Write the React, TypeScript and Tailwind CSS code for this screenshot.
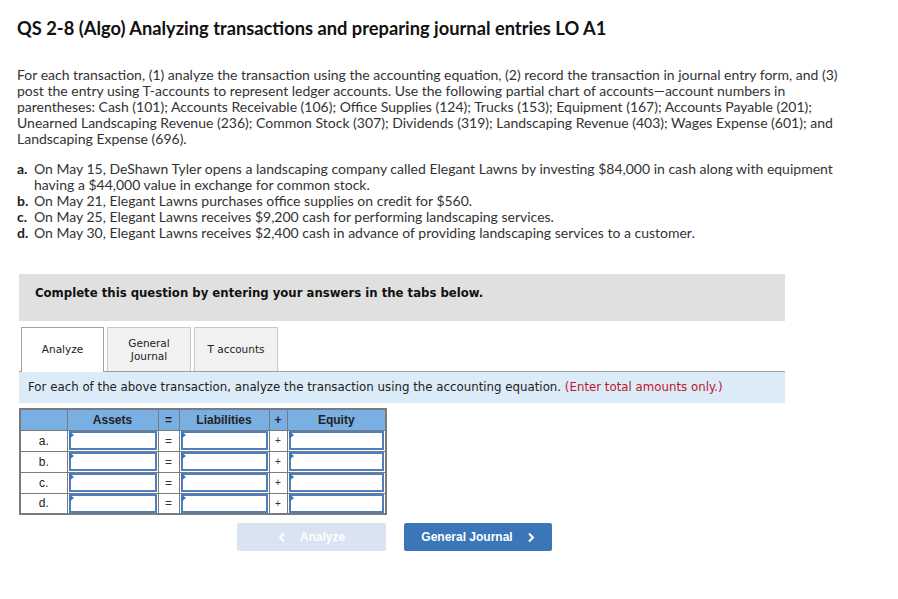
import React from 'react';

const rows = ['a.', 'b.', 'c.', 'd.'];

const InputCell: React.FC = () => (
  <td className="border border-[#7a7a7a] p-0 bg-white">
    <div className="relative h-[19px] mx-[1px] border-2 border-[#4f7fbd] bg-white">
      <span className="absolute -left-[2px] -top-[2px] w-0 h-0 border-t-[4px] border-b-[4px] border-l-[5px] border-t-transparent border-b-transparent border-l-[#3b73b9]" />
    </div>
  </td>
);

const Chevron: React.FC<{ left?: boolean }> = ({ left }) => (
  <svg width="8" height="11" viewBox="0 0 8 11">
    <path d={left ? 'M6 1.5 L2 5.5 L6 9.5' : 'M2 1.5 L6 5.5 L2 9.5'} stroke="white" strokeWidth="2" fill="none" />
  </svg>
);

const App: React.FC = () => {
  return (
    <div className="w-[898px] h-[599px] bg-white text-[#222] font-['Lato','Open_Sans',sans-serif]">
      <div className="pl-[17px] pt-[17px]">
        <h1 className="text-[18.3px] font-bold text-[#111] leading-[22px] whitespace-nowrap">
          QS 2-8 (Algo) Analyzing transactions and preparing journal entries LO A1
        </h1>

        <p className="mt-[28px] text-[14px] leading-[16px] text-[#333] whitespace-nowrap">
          For each transaction, (1) analyze the transaction using the accounting equation, (2) record the transaction in journal entry form, and (3)<br />
          post the entry using T-accounts to represent ledger accounts. Use the following partial chart of accounts—account numbers in<br />
          parentheses: Cash (101); Accounts Receivable (106); Office Supplies (124); Trucks (153); Equipment (167); Accounts Payable (201);<br />
          Unearned Landscaping Revenue (236); Common Stock (307); Dividends (319); Landscaping Revenue (403); Wages Expense (601); and<br />
          Landscaping Expense (696).
        </p>

        <div className="mt-[14px] text-[14px] leading-[16px] text-[#333] whitespace-nowrap">
          <div className="flex">
            <span className="w-[17px] shrink-0 font-bold text-[#222]">a.</span>
            <span>
              On May 15, DeShawn Tyler opens a landscaping company called Elegant Lawns by investing $84,000 in cash along with equipment<br />
              having a $44,000 value in exchange for common stock.
            </span>
          </div>
          <div className="flex">
            <span className="w-[17px] shrink-0 font-bold text-[#222]">b.</span>
            <span>On May 21, Elegant Lawns purchases office supplies on credit for $560.</span>
          </div>
          <div className="flex">
            <span className="w-[17px] shrink-0 font-bold text-[#222]">c.</span>
            <span>On May 25, Elegant Lawns receives $9,200 cash for performing landscaping services.</span>
          </div>
          <div className="flex">
            <span className="w-[17px] shrink-0 font-bold text-[#222]">d.</span>
            <span>On May 30, Elegant Lawns receives $2,400 cash in advance of providing landscaping services to a customer.</span>
          </div>
        </div>
      </div>

      <div className="ml-[19px] w-[766px] font-['DejaVu_Sans','Verdana',sans-serif]">
        <div className="mt-[33px] h-[47px] bg-[#e0e0e0] pt-[11px] pl-[16px] text-[13px] leading-[16px] font-bold text-[#111] font-['DejaVu_Sans_Condensed','DejaVu_Sans',sans-serif]">
          Complete this question by entering your answers in the tabs below.
        </div>

        <div className="mt-[7px] flex items-end gap-[3px] border-b border-[#a0a0a0] pl-[2px] h-[44px]">
          <div className="w-[83px] flex items-center justify-center bg-white border border-[#a0a0a0] border-b-0 -mb-[1px] h-[45px] text-[10.5px] text-[#222]">
            Analyze
          </div>
          <div className="w-[84px] h-[44px] flex items-center justify-center text-center bg-[#f1f1f1] border border-[#c8c8c8] border-b-0 text-[10.5px] leading-[13px] text-[#222]">
            General<br />Journal
          </div>
          <div className="w-[84px] h-[44px] flex items-center justify-center bg-[#f1f1f1] border border-[#c8c8c8] border-b-0 text-[10.5px] text-[#222]">
            T accounts
          </div>
        </div>

        <div className="h-[31px] bg-[#dcebf8] flex items-center pl-[9px] text-[11.8px] text-[#222] whitespace-nowrap">
          For each of the above transaction, analyze the transaction using the accounting equation.&nbsp;
          <span className="text-[#c0162c]">(Enter total amounts only.)</span>
        </div>

        <table className="mt-[5px] border-collapse border-2 border-[#7a7a7a] font-['Liberation_Sans','Arial',sans-serif] text-[12px]">
          <thead>
            <tr className="h-[21px] bg-[#7aafe4] text-[#222]">
              <th className="w-[47px] border border-[#7a7a7a] font-bold"></th>
              <th className="w-[91px] border border-[#7a7a7a] font-bold">Assets</th>
              <th className="w-[21px] border border-[#7a7a7a] font-bold">=</th>
              <th className="w-[90px] border border-[#7a7a7a] font-bold">Liabilities</th>
              <th className="w-[18px] border border-[#7a7a7a] font-bold">+</th>
              <th className="w-[99px] border border-[#7a7a7a] font-bold">Equity</th>
            </tr>
          </thead>
          <tbody>
            {rows.map((r) => (
              <tr key={r} className="h-[21px]">
                <td className="border border-[#7a7a7a] text-center text-[#222]">{r}</td>
                <InputCell />
                <td className="border border-[#7a7a7a] text-center text-[#333]">=</td>
                <InputCell />
                <td className="border border-[#7a7a7a] text-center text-[10px] text-[#333]">+</td>
                <InputCell />
              </tr>
            ))}
          </tbody>
        </table>

        <div className="mt-[8px] flex gap-[18px] pl-[218px] font-['Liberation_Sans','Arial',sans-serif]">
          <div className="w-[149px] h-[28px] rounded-[2px] bg-[#d9e3f1] flex items-center justify-center gap-[14px] text-white text-[12px] font-bold">
            <Chevron left />
            <span>Analyze</span>
          </div>
          <div className="w-[148px] h-[28px] rounded-[2px] bg-[#3b76b9] flex items-center justify-center gap-[14px] text-white text-[12px] font-bold">
            <span>General Journal</span>
            <Chevron />
          </div>
        </div>
      </div>
    </div>
  );
};

export default App;
